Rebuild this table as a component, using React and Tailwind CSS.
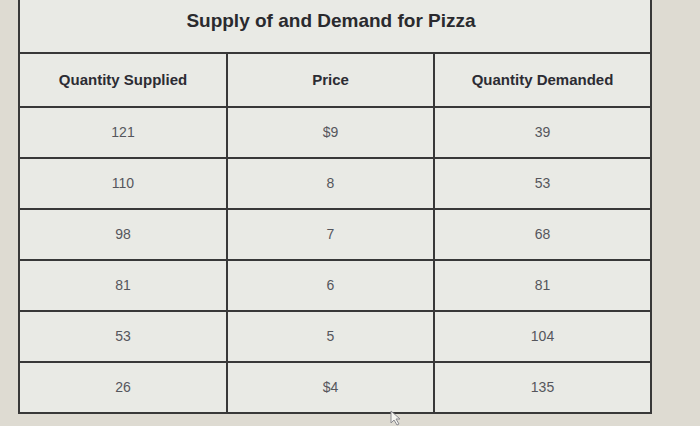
// App.jsx — Supply and demand table (photo of a screen)

const rows = [
  ['121', '$9', '39'],
  ['110', '8', '53'],
  ['98', '7', '68'],
  ['81', '6', '81'],
  ['53', '5', '104'],
  ['26', '$4', '135'],
]

export default function App() {
  return (
    <div className="relative w-[700px] h-[426px] overflow-hidden bg-[#dedbd2] pl-[18px] font-['Liberation_Sans',Arial,sans-serif]">
      <div className="w-[634px] bg-[#e9eae5] border-x-2 border-b-2 border-[#383838]">
        {/* ── Título ── */}
        <div className="h-[52px] pt-[10px] pr-[8px] text-center text-[19px] leading-[22px] font-bold text-[#2a2a2e]">
          Supply of and Demand for Pizza
        </div>

        {/* ── Tabla ── */}
        <div className="grid grid-cols-[206px_207px_1fr]">
          {['Quantity Supplied', 'Price', 'Quantity Demanded'].map((h, i) => (
            <div key={h}
              className={`h-[54px] flex items-center justify-center border-t-2 border-[#383838] text-[15px] font-bold text-[#2c2c33] ${i > 0 ? 'border-l-2' : ''}`}>
              {h}
            </div>
          ))}
          {rows.map((r, ri) =>
            r.map((v, i) => (
              <div key={`${ri}-${i}`}
                className={`h-[51px] flex items-center justify-center border-t-2 border-[#383838] text-[14px] text-[#55565c] ${i > 0 ? 'border-l-2' : ''}`}>
                {v}
              </div>
            ))
          )}
        </div>
      </div>

      {/* cursor */}
      <svg className="absolute left-[390px] top-[410px]" width="12" height="16" viewBox="0 0 12 16">
        <path d="M1 1 L1 13 L4 10 L7 15 L9 14 L6 9 L10 9 Z" fill="#f4f4f0" stroke="#8a8a90" strokeWidth="1" />
      </svg>
    </div>
  )
}
